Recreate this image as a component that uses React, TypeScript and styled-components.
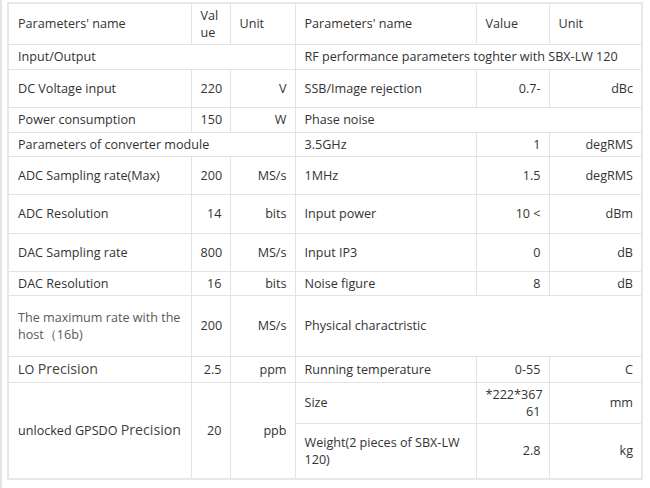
import React from "react";
import styled, { createGlobalStyle } from "styled-components";

const Global = createGlobalStyle`
  html, body { margin: 0; padding: 0; background: #fff; }
  body { font-family: "Open Sans", "Noto Sans", sans-serif; }
`;

const Frame = styled.div`
  border-left: 2px solid #e4e4e4;
  min-height: 488px;
  box-sizing: border-box;
  padding: 2px 0 0 5px;
`;

const Table = styled.table`
  border-collapse: collapse;
  table-layout: fixed;
  width: 634px;
  border: 2px solid #e8e8e8;
  font-size: 12.6px;
  color: #333;
`;

const Row = styled.tr<{ $h: number }>`
  height: ${(p) => p.$h}px;
`;

const Cell = styled.td<{ $align?: "left" | "right" }>`
  border: 1px solid #e3e3e3;
  padding: 0 8px 0 9px;
  text-align: ${(p) => p.$align ?? "left"};
  vertical-align: middle;
  line-height: 17px;
  white-space: ${(p) => (p.$align === "right" ? "nowrap" : "normal")};
`;

const Muted = styled.span`
  color: #595959;
`;

const Big = styled.span`
  font-size: 14.2px;
  color: #444;
`;

export default function App() {
  return (
    <>
      <Global />
      <Frame>
        <Table>
          <colgroup>
            <col style={{ width: 183 }} />
            <col style={{ width: 39 }} />
            <col style={{ width: 65 }} />
            <col style={{ width: 181 }} />
            <col style={{ width: 73 }} />
            <col style={{ width: 93 }} />
          </colgroup>
          <tbody>
            <Row $h={41}>
              <Cell>Parameters' name</Cell>
              <Cell>
                Val
                <br />
                ue
              </Cell>
              <Cell>Unit</Cell>
              <Cell>Parameters' name</Cell>
              <Cell>Value</Cell>
              <Cell>Unit</Cell>
            </Row>
            <Row $h={25}>
              <Cell colSpan={3}>Input/Output</Cell>
              <Cell colSpan={3}>RF performance parameters toghter with SBX-LW 120</Cell>
            </Row>
            <Row $h={38}>
              <Cell>DC Voltage input</Cell>
              <Cell $align="right">220</Cell>
              <Cell $align="right">V</Cell>
              <Cell>SSB/Image rejection</Cell>
              <Cell $align="right">0.7-</Cell>
              <Cell $align="right">dBc</Cell>
            </Row>
            <Row $h={25}>
              <Cell>Power consumption</Cell>
              <Cell $align="right">150</Cell>
              <Cell $align="right">W</Cell>
              <Cell colSpan={3}>Phase noise</Cell>
            </Row>
            <Row $h={24}>
              <Cell colSpan={3}>Parameters of converter module</Cell>
              <Cell>3.5GHz</Cell>
              <Cell $align="right">1</Cell>
              <Cell $align="right">degRMS</Cell>
            </Row>
            <Row $h={38}>
              <Cell>ADC Sampling rate(Max)</Cell>
              <Cell $align="right">200</Cell>
              <Cell $align="right">MS/s</Cell>
              <Cell>1MHz</Cell>
              <Cell $align="right">1.5</Cell>
              <Cell $align="right">degRMS</Cell>
            </Row>
            <Row $h={39}>
              <Cell>ADC Resolution</Cell>
              <Cell $align="right">14</Cell>
              <Cell $align="right">bits</Cell>
              <Cell>Input power</Cell>
              <Cell $align="right">10 &lt;</Cell>
              <Cell $align="right">dBm</Cell>
            </Row>
            <Row $h={38}>
              <Cell>DAC Sampling rate</Cell>
              <Cell $align="right">800</Cell>
              <Cell $align="right">MS/s</Cell>
              <Cell>Input IP3</Cell>
              <Cell $align="right">0</Cell>
              <Cell $align="right">dB</Cell>
            </Row>
            <Row $h={24}>
              <Cell>DAC Resolution</Cell>
              <Cell $align="right">16</Cell>
              <Cell $align="right">bits</Cell>
              <Cell>Noise figure</Cell>
              <Cell $align="right">8</Cell>
              <Cell $align="right">dB</Cell>
            </Row>
            <Row $h={61}>
              <Cell>
                <Muted>The maximum rate with the host（16b)</Muted>
              </Cell>
              <Cell $align="right">200</Cell>
              <Cell $align="right">MS/s</Cell>
              <Cell colSpan={3}>Physical charactristic</Cell>
            </Row>
            <Row $h={26}>
              <Cell>
                LO <Big>Precision</Big>
              </Cell>
              <Cell $align="right">2.5</Cell>
              <Cell $align="right">ppm</Cell>
              <Cell>Running temperature</Cell>
              <Cell $align="right">0-55</Cell>
              <Cell $align="right">C</Cell>
            </Row>
            <Row $h={41}>
              <Cell rowSpan={2}>
                unlocked GPSDO <Big>Precision</Big>
              </Cell>
              <Cell rowSpan={2} $align="right">20</Cell>
              <Cell rowSpan={2} $align="right">ppb</Cell>
              <Cell>Size</Cell>
              <Cell $align="right">
                *222*367
                <br />
                61
              </Cell>
              <Cell $align="right">mm</Cell>
            </Row>
            <Row $h={56}>
              <Cell>Weight(2 pieces of SBX-LW 120)</Cell>
              <Cell $align="right">2.8</Cell>
              <Cell $align="right">kg</Cell>
            </Row>
          </tbody>
        </Table>
      </Frame>
    </>
  );
}
